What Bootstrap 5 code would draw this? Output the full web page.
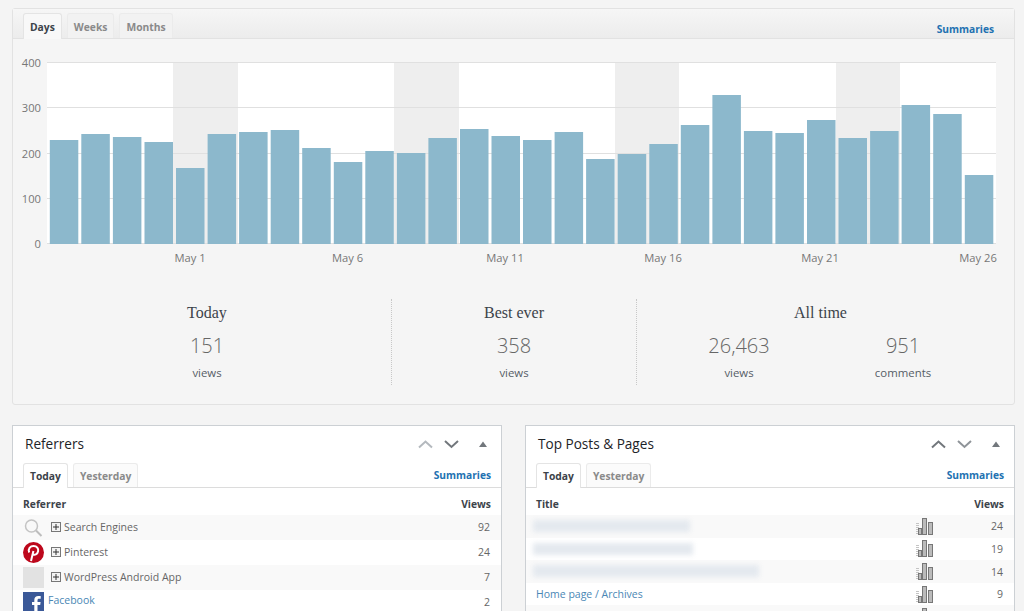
<!doctype html>
<html lang="en">
<head>
<meta charset="utf-8">
<title>Stats</title>
<link rel="stylesheet" href="https://cdn.jsdelivr.net/npm/bootstrap@5.3.0/dist/css/bootstrap.min.css">
<style>
html,body{height:611px;overflow:hidden}
body{background:#f4f4f4;font-family:"Open Sans","Liberation Sans",sans-serif;font-size:10.5px;color:#666}
.page-wrap{padding:8px 9px 0 12px}
.main-panel{height:397px;background:#f5f5f5;border:1px solid #e2e2e2;border-radius:3px}
.tab-bar{height:30px;padding:0 20px 0 10px;background:linear-gradient(#f6f6f6,#ececec);border-bottom:1px solid #e2e2e2}
.stat-tabs{border:0;gap:5px;flex-wrap:nowrap}
.stat-tabs a{display:block;height:25px;padding:0 6px;line-height:26px;font-size:10.3px;font-weight:700;color:#8a8a8a;background:#f2f2f2;border:1px solid #ebebeb;border-bottom:0;border-radius:3px 3px 0 0;text-decoration:none;margin-top:5px}
.stat-tabs a.active{color:#3c434a;background:#f8f8f8;height:26px;border-color:#e4e4e4}
.sum-link{font-size:10.2px;font-weight:700;color:#2271b1;text-decoration:none;line-height:1}
.tab-bar .sum-link{margin-top:12px}
.chart-svg{display:block;margin-top:1px}
.chart-svg text{font-family:"Open Sans","Liberation Sans",sans-serif;font-size:11.2px;fill:#777}
.stat-row{margin:30px 0 0 0;height:86px;display:flex}
.stat-col{text-align:center;height:86px}
.col-today{width:378px;padding-left:10px}
.col-best{width:245px;border-left:1px dotted #c8c8c8}
.col-all{width:378px;border-left:1px dotted #c8c8c8;padding-right:10px}
.stat-head{font-family:"Liberation Serif",serif;font-size:16px;line-height:20px;padding-top:4px;color:#3c434a}
.stat-num{font-size:20px;font-weight:300;line-height:26px;margin-top:10px;color:#666}
.stat-lab{font-size:11.4px;line-height:16px;margin-top:6px;color:#555d66}
.all-left{width:204px}
.all-right{width:124px}
.lower{display:flex;justify-content:space-between;margin-top:20px}
.box{width:490px;height:300px;background:#fff;border:1px solid #ccd0d4}
.box-head{height:38px;padding:0 13px 3px 12px}
.box-title{font-size:13.6px;font-weight:500;color:#1d2327;line-height:34px;margin:0}
.box-tabs-row{height:24px;padding:0 10px 0 10px;border-bottom:1px solid #dcdcdc}
.box-tabs-row .stat-tabs a{margin-top:0;height:24px;line-height:24px;background:#fbfbfb}
.box-tabs-row .stat-tabs a.active{background:#fff;height:25px}
.data-tbl{width:100%;margin:0;font-size:10.5px}
.data-tbl th{font-weight:700;color:#3c434a;height:27px;padding:7px 10px 0 10px;font-size:10.3px}
.data-tbl td{padding:0 11px;color:#666}
.data-tbl tbody tr:nth-child(odd) td{background:#f9f9f9}
.refs td{height:25px}
.posts td{height:22.6px}
.data-tbl .ic{width:31px;padding:0 0 0 10px}
.data-tbl .plus-cell{padding-left:7px}
.data-tbl .fb-cell{padding-left:4px;vertical-align:top;line-height:20px}
.num-cell{text-align:right}
.plus-box{display:inline-block;vertical-align:-1px;margin-right:3px}
.row-ic{display:block}
.link-blue{color:#4a87b5;text-decoration:none}
.data-tbl td.home-cell{padding:2px 0 0 10px}
.blur-bar{display:block;height:12px;background:#e4e9ef;filter:blur(2.5px)}
.stat-ic{display:block;margin-left:auto;margin-right:11px}
.data-tbl .ic-cell{width:60px;padding:0}
.data-tbl td.n-cell{width:70px;padding-top:2px}
</style>
</head>
<body>
<div class="page-wrap">
  <section class="main-panel">
    <div class="tab-bar d-flex justify-content-between align-items-center">
      <ul class="nav stat-tabs">
        <li><a class="active" href="#">Days</a></li>
        <li><a href="#">Weeks</a></li>
        <li><a href="#">Months</a></li>
      </ul>
      <a class="sum-link" href="#">Summaries</a>
    </div>
    <svg class="chart-svg" id="chart" width="1001" height="229" viewBox="13 40 1001 229"></svg>
    <div class="stat-row">
      <div class="stat-col col-today">
        <div class="stat-head">Today</div><div class="stat-num">151</div><div class="stat-lab">views</div>
      </div>
      <div class="stat-col col-best">
        <div class="stat-head">Best ever</div><div class="stat-num">358</div><div class="stat-lab">views</div>
      </div>
      <div class="stat-col col-all">
        <div class="stat-head">All time</div>
        <div class="d-flex justify-content-start ps-0">
          <div class="all-left"><div class="stat-num">26,463</div><div class="stat-lab">views</div></div>
          <div class="all-right"><div class="stat-num">951</div><div class="stat-lab">comments</div></div>
        </div>
      </div>
    </div>
  </section>

  <div class="lower">
    <section class="box">
      <div class="box-head d-flex justify-content-between align-items-center">
        <h2 class="box-title">Referrers</h2>
        <svg width="70" height="12" viewBox="0 0 70 12" fill="none"><path d="M1 9.500 7.500 3.500 14 9.500" stroke="#b4b9be" stroke-width="2"/><path d="M27 3 33.500 9 40 3" stroke="#72777c" stroke-width="2"/><path d="M61 9l4-5.500 4 5.500z" fill="#72777c"/></svg>
      </div>
      <div class="box-tabs-row d-flex justify-content-between align-items-center">
        <ul class="nav stat-tabs">
          <li><a class="active" href="#">Today</a></li>
          <li><a href="#">Yesterday</a></li>
        </ul>
        <a class="sum-link" href="#">Summaries</a>
      </div>
      <table class="data-tbl refs">
        <thead><tr><th colspan="2">Referrer</th><th class="num-cell">Views</th></tr></thead>
        <tbody>
          <tr>
            <td class="ic"><svg class="row-ic" width="20" height="20" viewBox="0 0 20 20" fill="none"><circle cx="8.500" cy="8" r="6" stroke="#c4c4c4" stroke-width="1.500"/><path d="M13 12.500 18.500 18" stroke="#bdbdbd" stroke-width="2"/></svg></td>
            <td class="plus-cell"><svg class="plus-box" width="10" height="10" viewBox="0 0 10 10"><rect x=".5" y=".5" width="9" height="9" fill="#f4f4f4" stroke="#777"/><path d="M2 5h6M5 2v6" stroke="#333"/></svg>Search Engines</td>
            <td class="num-cell">92</td>
          </tr>
          <tr>
            <td class="ic"><svg class="row-ic" width="21" height="21" viewBox="0 0 21 21"><circle cx="10.500" cy="10.500" r="10.500" fill="#bd081c"/><path d="M8 19l2.400-10M6.200 10.500C4.600 6.800 7.300 4 10.600 4c3.300 0 5.100 2.300 4.500 5.300-.6 3-3.600 4.500-5.200 2.600" fill="none" stroke="#fff" stroke-width="2"/></svg></td>
            <td class="plus-cell"><svg class="plus-box" width="10" height="10" viewBox="0 0 10 10"><rect x=".5" y=".5" width="9" height="9" fill="#f4f4f4" stroke="#777"/><path d="M2 5h6M5 2v6" stroke="#333"/></svg>Pinterest</td>
            <td class="num-cell">24</td>
          </tr>
          <tr>
            <td class="ic"><svg class="row-ic" width="21" height="21" viewBox="0 0 21 21"><rect width="21" height="21" fill="#e2e2e2"/></svg></td>
            <td class="plus-cell"><svg class="plus-box" width="10" height="10" viewBox="0 0 10 10"><rect x=".5" y=".5" width="9" height="9" fill="#f4f4f4" stroke="#777"/><path d="M2 5h6M5 2v6" stroke="#333"/></svg>WordPress Android App</td>
            <td class="num-cell">7</td>
          </tr>
          <tr>
            <td class="ic"><svg class="row-ic" width="21" height="21" viewBox="0 0 21 21"><rect width="21" height="21" fill="#3b5998"/><path d="M14.500 21v-8h2.700l.4-3h-3.100V8.200c0-.9.300-1.500 1.500-1.500h1.700V4.100c-.3 0-1.300-.1-2.400-.1-2.400 0-4 1.400-4 4.100V10H9v3h2.300v8z" fill="#fff"/></svg></td>
            <td class="fb-cell"><a class="link-blue" href="#">Facebook</a></td>
            <td class="num-cell">2</td>
          </tr>
        </tbody>
      </table>
    </section>

    <section class="box">
      <div class="box-head d-flex justify-content-between align-items-center">
        <h2 class="box-title">Top Posts &amp; Pages</h2>
        <svg width="70" height="12" viewBox="0 0 70 12" fill="none"><path d="M1 9.500 7.500 3.500 14 9.500" stroke="#72777c" stroke-width="2"/><path d="M27 3 33.500 9 40 3" stroke="#8f9499" stroke-width="2"/><path d="M61 9l4-5.500 4 5.500z" fill="#72777c"/></svg>
      </div>
      <div class="box-tabs-row d-flex justify-content-between align-items-center">
        <ul class="nav stat-tabs">
          <li><a class="active" href="#">Today</a></li>
          <li><a href="#">Yesterday</a></li>
        </ul>
        <a class="sum-link" href="#">Summaries</a>
      </div>
      <table class="data-tbl posts">
        <thead><tr><th>Title</th><th></th><th class="num-cell">Views</th></tr></thead>
        <tbody id="posts"></tbody>
      </table>
    </section>
  </div>
</div>
<script>
(function(){
  var tops=[140,134,137,142,168,134,132,130,148,162,151,153,138,129,136,140,132,159,154,144,125,95,131,133,120,138,131,105,114,175];
  var s='';
  s+='<rect x="47" y="62" width="949" height="182" fill="#fff"/>';
  [[173,65],[394,65],[615,64],[836,64]].forEach(function(b){s+='<rect x="'+b[0]+'" y="62" width="'+b[1]+'" height="182" fill="#eee"/>';});
  [[62,'400'],[107.5,'300'],[153,'200'],[198.5,'100'],[243.5,'0']].forEach(function(g){
    s+='<rect x="47" y="'+Math.floor(g[0])+'" width="949" height="1" fill="#e0e0e0"/>';
    s+='<text x="41" y="'+(g[0]+4.5)+'" text-anchor="end">'+g[1]+'</text>';
  });
  tops.forEach(function(t,i){
    var x=47+31.55*i+2.8;
    s+='<rect x="'+x.toFixed(1)+'" y="'+t+'" width="28.5" height="'+(244-t)+'" fill="#8cb8cc"/>';
  });
  [[190,'May 1'],[347.5,'May 6'],[505,'May 11'],[663,'May 16'],[820,'May 21'],[978,'May 26']].forEach(function(l){
    s+='<text x="'+l[0]+'" y="262" text-anchor="middle">'+l[1]+'</text>';
  });
  document.getElementById('chart').innerHTML=s;
  var ic='<svg class="stat-ic" width="17" height="17" viewBox="0 0 17 17"><path d="M0 5.500h3M0 7.500h3M0 9.500h3M0 11.500h3M0 13.500h3M0 15.500h3" stroke="#c4c4c4" fill="none"/><g fill="#bbb" stroke="#777" stroke-width="1"><rect x="2.500" y="10.500" width="3" height="6"/><rect x="6.500" y=".5" width="4" height="16"/><rect x="12.500" y="4.500" width="4" height="12"/></g></svg>';
  var rows=[[157,24],[160,19],[226,14],[0,9],[0,'']];
  var h='';
  rows.forEach(function(r,i){
    var t=r[0]?'<td><span class="blur-bar" style="width:'+r[0]+'px;margin-left:-4px"></span></td>':(i==3?'<td class="home-cell"><a class="link-blue" href="#">Home page / Archives</a></td>':'<td></td>');
    h+='<tr>'+t+'<td class="ic-cell">'+ic+'</td><td class="num-cell n-cell">'+r[1]+'</td></tr>';
  });
  document.getElementById('posts').innerHTML=h;
})();
</script>
<script src="https://cdn.jsdelivr.net/npm/bootstrap@5.3.0/dist/js/bootstrap.bundle.min.js"></script>
</body>
</html>
